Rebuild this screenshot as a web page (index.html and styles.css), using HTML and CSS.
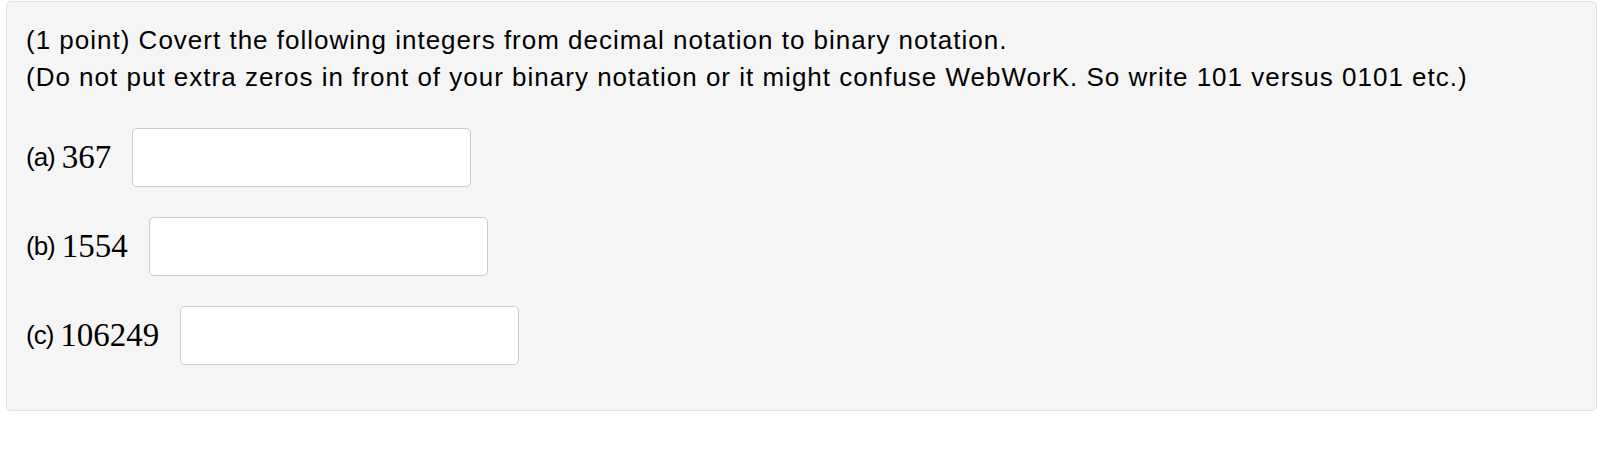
FILE: index.html
```html
<!DOCTYPE html>
<html>
<head>
<meta charset="utf-8">
<link rel="stylesheet" href="styles.css">
</head>
<body>
<div class="problem">
  <p class="intro">(1 point) Covert the following integers from decimal notation to binary notation.<br>(Do not put extra zeros in front of your binary notation or it might confuse WebWorK. So write 101 versus 0101 etc.)</p>
  <div class="row"><span class="lbl">(a)</span><span class="math">367</span><input class="answer" type="text"></div>
  <div class="row"><span class="lbl">(b)</span><span class="math">1554</span><input class="answer" type="text"></div>
  <div class="row"><span class="lbl">(c)</span><span class="math">106249</span><input class="answer" type="text"></div>
</div>
</body>
</html>
```
FILE: styles.css
```css
html, body {
  margin: 0;
  padding: 0;
  background: #ffffff;
}
body {
  padding: 1px 11px 0 6px;
  font-family: "Liberation Sans", Arial, sans-serif;
  color: #000;
}
.problem {
  background: #f5f5f5;
  border: 1px solid #e1e1e1;
  border-radius: 5px;
  box-sizing: border-box;
  padding: 20px 19px 0 19px;
  height: 410px;
  display: flex;
  flex-direction: column;
  gap: 30px;
}
.intro {
  margin: 0 0 1.5px 0;
  font-size: 26px;
  line-height: 37px;
  letter-spacing: 1px;
}
.row {
  display: flex;
  align-items: center;
  height: 59px;
}
.lbl {
  font-size: 26px;
  letter-spacing: -1px;
}
.math {
  font-family: "Liberation Serif", "Times New Roman", serif;
  font-size: 33px;
  margin-left: 7px;
}
.answer {
  margin: 0 0 0 21px;
  width: 339px;
  height: 59px;
  box-sizing: border-box;
  background: #fff;
  border: 1px solid #cccccc;
  border-radius: 5px;
  padding: 4px 8px;
  font-size: 20px;
  outline: none;
}
```
